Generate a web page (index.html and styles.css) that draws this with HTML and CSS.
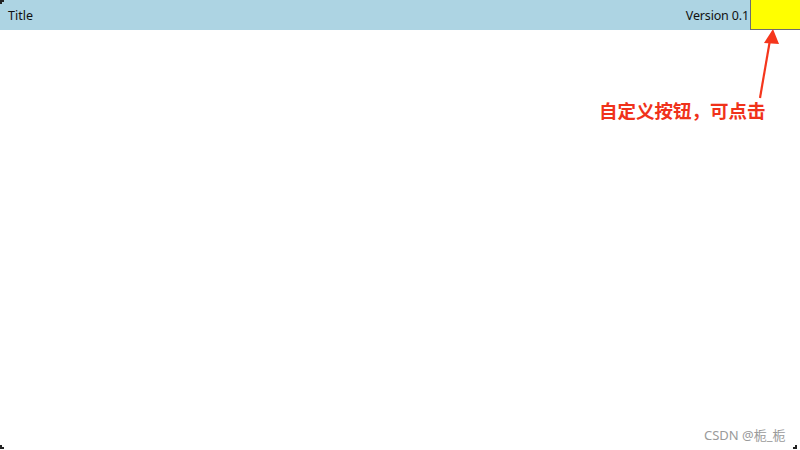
FILE: index.html
```html
<!DOCTYPE html>
<html>
<head>
<meta charset="utf-8">
<link rel="stylesheet" href="styles.css">
</head>
<body>
<div class="window">
  <header class="titlebar">
    <span class="title">Title</span>
    <div class="right">
      <span class="version">Version 0.1</span>
      <button class="custom-btn" aria-label="custom"></button>
    </div>
  </header>
  <main class="content"></main>
  <svg class="arrow" width="40" height="80" viewBox="0 0 40 80">
    <line x1="30" y1="12" x2="20" y2="70" stroke="#f5361c" stroke-width="2.2"/>
    <polygon points="33,1 39,16 24,15" fill="#f5361c"/>
  </svg>
  <div class="note">自定义按钮，可点击</div>
  <div class="watermark">CSDN @栀_栀</div>
  <span class="corner tl"></span>
  <span class="corner bl"></span>
  <span class="corner br"></span>
</div>
</body>
</html>
```
FILE: styles.css
```css
html, body {
  margin: 0;
  padding: 0;
  background: #fff;
}
.window {
  position: relative;
  width: 800px;
  height: 450px;
  display: flex;
  flex-direction: column;
  font-family: "Noto Sans", "Noto Sans CJK SC", sans-serif;
}
.titlebar {
  height: 30px;
  background: #add4e3;
  display: flex;
  align-items: center;
  justify-content: space-between;
  padding-left: 8px;
  font-size: 12.5px;
  color: #111;
}
.right {
  display: flex;
  align-items: stretch;
  height: 30px;
}
.version {
  display: flex;
  align-items: center;
  padding-right: 1px;
  letter-spacing: -0.15px;
}
.custom-btn {
  width: 50px;
  height: 30px;
  margin: 0;
  padding: 0;
  background: #ffff00;
  border: none;
  border-left: 1px solid #6e6e6e;
  border-bottom: 1px solid #6e6e6e;
  box-sizing: border-box;
}
.content {
  flex: 1;
}
.arrow {
  position: absolute;
  left: 740px;
  top: 28px;
}
.note {
  position: absolute;
  left: 599px;
  top: 98px;
  font-family: "Noto Sans CJK SC", sans-serif;
  font-weight: 700;
  font-size: 18.5px;
  line-height: 24px;
  color: #f0321a;
}
.watermark {
  position: absolute;
  left: 704px;
  top: 425px;
  font-family: "Noto Sans", "Noto Sans CJK SC", sans-serif;
  font-size: 13px;
  color: #9a9a9a;
}
.corner {
  position: absolute;
  width: 2px;
  height: 2px;
}
.corner.tl {
  left: 0;
  top: 0;
  border-left: 2px solid #222;
  border-top: 2px solid #222;
}
.corner.bl {
  left: 0;
  top: 445px;
  border-left: 2px solid #222;
  border-bottom: 2px solid #222;
}
.corner.br {
  left: 793px;
  top: 445px;
  border-right: 2px solid #222;
  border-bottom: 2px solid #222;
}
```
